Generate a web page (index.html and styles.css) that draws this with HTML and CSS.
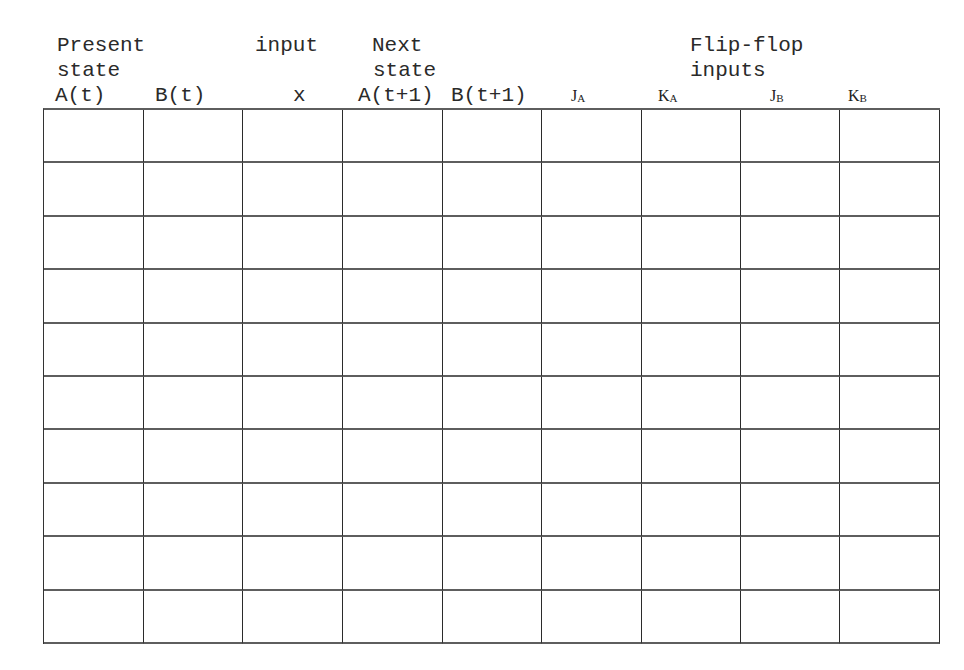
FILE: index.html
```html
<!DOCTYPE html>
<html>
<head>
<meta charset="utf-8">
<link rel="stylesheet" href="styles.css">
</head>
<body>
<div class="page">
  <div class="head">
    <div class="hrow">
      <span class="c1 p14">Present</span>
      <span class="c3 p13">input</span>
      <span class="c4 p30">Next</span>
      <span class="c7 p49">Flip-flop</span>
    </div>
    <div class="hrow">
      <span class="c1 p14">state</span>
      <span class="c4 p31">state</span>
      <span class="c7 p49">inputs</span>
    </div>
    <div class="hrow">
      <span class="c1 p12">A(t)</span>
      <span class="c2 p12">B(t)</span>
      <span class="c3 p51">x</span>
      <span class="c4 p16">A(t+1)</span>
      <span class="c5 p9">B(t+1)</span>
      <span class="c6 p30 ff">J<span class="sub">A</span></span>
      <span class="c7 p17 ff">K<span class="sub">A</span></span>
      <span class="c8 p30 ff">J<span class="sub">B</span></span>
      <span class="c9 p9 ff">K<span class="sub">B</span></span>
    </div>
  </div>
  <div class="grid">
    <div class="cell"></div><div class="cell"></div><div class="cell"></div><div class="cell"></div><div class="cell"></div><div class="cell"></div><div class="cell"></div><div class="cell"></div><div class="cell"></div>
    <div class="cell"></div><div class="cell"></div><div class="cell"></div><div class="cell"></div><div class="cell"></div><div class="cell"></div><div class="cell"></div><div class="cell"></div><div class="cell"></div>
    <div class="cell"></div><div class="cell"></div><div class="cell"></div><div class="cell"></div><div class="cell"></div><div class="cell"></div><div class="cell"></div><div class="cell"></div><div class="cell"></div>
    <div class="cell"></div><div class="cell"></div><div class="cell"></div><div class="cell"></div><div class="cell"></div><div class="cell"></div><div class="cell"></div><div class="cell"></div><div class="cell"></div>
    <div class="cell"></div><div class="cell"></div><div class="cell"></div><div class="cell"></div><div class="cell"></div><div class="cell"></div><div class="cell"></div><div class="cell"></div><div class="cell"></div>
    <div class="cell"></div><div class="cell"></div><div class="cell"></div><div class="cell"></div><div class="cell"></div><div class="cell"></div><div class="cell"></div><div class="cell"></div><div class="cell"></div>
    <div class="cell"></div><div class="cell"></div><div class="cell"></div><div class="cell"></div><div class="cell"></div><div class="cell"></div><div class="cell"></div><div class="cell"></div><div class="cell"></div>
    <div class="cell"></div><div class="cell"></div><div class="cell"></div><div class="cell"></div><div class="cell"></div><div class="cell"></div><div class="cell"></div><div class="cell"></div><div class="cell"></div>
    <div class="cell"></div><div class="cell"></div><div class="cell"></div><div class="cell"></div><div class="cell"></div><div class="cell"></div><div class="cell"></div><div class="cell"></div><div class="cell"></div>
    <div class="cell"></div><div class="cell"></div><div class="cell"></div><div class="cell"></div><div class="cell"></div><div class="cell"></div><div class="cell"></div><div class="cell"></div><div class="cell"></div>
  </div>
</div>
</body>
</html>
```
FILE: styles.css
```css
html, body {
  margin: 0;
  padding: 0;
  background: #fff;
}
.page {
  padding: 33px 0 0 43px;
}
.head {
  width: 897px;
  font-family: "Liberation Mono", "Courier New", monospace;
  font-size: 21px;
  line-height: 25px;
  color: #2a2a2a;
}
.hrow {
  display: grid;
  grid-template-columns: 100px 99px 100px 100px 99px 100px 99px 99px 100px;
  height: 25px;
  white-space: nowrap;
}
.hrow > span { grid-row: 1; }
.c1 { grid-column: 1; }
.c2 { grid-column: 2; }
.c3 { grid-column: 3; }
.c4 { grid-column: 4; }
.c5 { grid-column: 5; }
.c6 { grid-column: 6; }
.c7 { grid-column: 7; }
.c8 { grid-column: 8; }
.c9 { grid-column: 9; }
.p9 { padding-left: 9px; }
.p12 { padding-left: 12px; }
.p13 { padding-left: 13px; }
.p14 { padding-left: 14px; }
.p16 { padding-left: 16px; }
.p17 { padding-left: 17px; }
.p30 { padding-left: 30px; }
.p31 { padding-left: 31px; }
.p49 { padding-left: 49px; }
.p51 { padding-left: 51px; }
.ff {
  font-family: "Liberation Serif", "Times New Roman", serif;
  font-size: 16px;
  color: #222;
}
.sub {
  font-size: 11px;
  position: relative;
  top: 1px;
}
.grid {
  display: grid;
  grid-template-columns: 100px 99px 100px 100px 99px 100px 99px 99px 100px;
  grid-auto-rows: 53.4px;
  width: 897px;
  box-sizing: border-box;
  border-top: 2px solid #5e5e5e;
  border-left: 1px solid #333;
}
.cell {
  box-sizing: border-box;
  border-right: 1px solid #2b2b2b;
  border-bottom: 2px solid #5e5e5e;
}
```
